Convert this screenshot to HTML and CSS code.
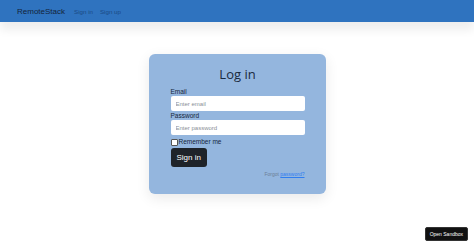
FILE: index.html
```html
<!DOCTYPE html>
<html lang="en">
<head>
  <meta charset="UTF-8">
  <meta name="viewport" content="width=device-width, initial-scale=1.0">
  <title>RemoteStack</title>
  <link rel="stylesheet" href="styles.css">
</head>
<body>
  <nav class="navbar">
    <span class="brand">RemoteStack</span>
    <a href="#" class="nav-link">Sign in</a>
    <a href="#" class="nav-link">Sign up</a>
  </nav>

  <div class="page">
    <form class="login-card">
      <h1 class="title">Log in</h1>
      <label class="label">Email</label>
      <input type="text" class="field" placeholder="Enter email">
      <label class="label">Password</label>
      <input type="password" class="field" placeholder="Enter password">
      <div class="remember">
        <span class="check"></span>
        <span>Remember me</span>
      </div>
      <div class="actions">
        <button type="button" class="submit">Sign in</button>
      </div>
      <p class="forgot">Forgot <a href="#">password?</a></p>
    </form>
  </div>

  <button class="sandbox">Open Sandbox</button>
</body>
</html>
```

FILE: styles.css
```css
body, html {
  height: 100%;
  margin: 0;
  overflow: hidden;
}

body {
  font-family: "Liberation Sans", Arial, sans-serif;
  background: #fff;
  position: relative;
}

.navbar {
  height: 22px;
  background: #2f73bf;
  display: flex;
  align-items: center;
  padding-left: 17px;
  gap: 7px;
  box-shadow: 0 8px 10px rgba(0, 0, 0, 0.07);
  position: relative;
}

.brand {
  font-size: 8px;
  color: #14243a;
  margin-right: 2px;
}

.nav-link {
  font-size: 6.2px;
  color: #1b4a85;
  text-decoration: none;
}

.page {
  display: flex;
  justify-content: center;
  padding-top: 32px;
}

.login-card {
  width: 134px;
  padding: 12px 21px 17px 22px;
  background: #94b6de;
  border-radius: 6px;
  box-shadow: 0 4px 14px rgba(0, 0, 0, 0.09);
  display: flex;
  flex-direction: column;
}

.title {
  margin: 0 0 6px;
  text-align: center;
  font-family: "Open Sans", sans-serif;
  font-weight: 400;
  font-size: 13px;
  line-height: 16px;
  color: #1a2a40;
}

.label {
  font-size: 6.5px;
  line-height: 8px;
  color: #16263c;
}

.field {
  height: 15px;
  box-sizing: border-box;
  border: none;
  border-radius: 2px;
  padding: 0 5px;
  font-family: "Liberation Sans", Arial, sans-serif;
  font-size: 6px;
  background: #fff;
  margin-bottom: 1px;
}

.field::placeholder {
  color: #8a8f96;
}

.remember {
  display: flex;
  align-items: center;
  gap: 1px;
  font-size: 6.5px;
  line-height: 8px;
  color: #16263c;
  margin-top: 2px;
}

.check {
  width: 5px;
  height: 5px;
  background: #fff;
  border: 0.5px solid #555;
  border-radius: 1px;
}

.actions {
  margin-top: 0;
}

.submit {
  background: #1e2329;
  color: #fff;
  border: none;
  border-radius: 3px;
  height: 19px;
  padding: 0 6px;
  font-family: "Liberation Sans", Arial, sans-serif;
  font-size: 8px;
}

.forgot {
  margin: 4px 0 0;
  text-align: right;
  font-size: 5px;
  color: #6d7f96;
}

.forgot a {
  color: #2f7df0;
}

.sandbox {
  position: absolute;
  right: 6px;
  bottom: 7px;
  background: #111;
  color: #fff;
  border: 1px solid #333;
  border-radius: 2px;
  height: 14px;
  padding: 0 4px;
  font-family: "Liberation Sans", Arial, sans-serif;
  font-size: 5px;
}
```
